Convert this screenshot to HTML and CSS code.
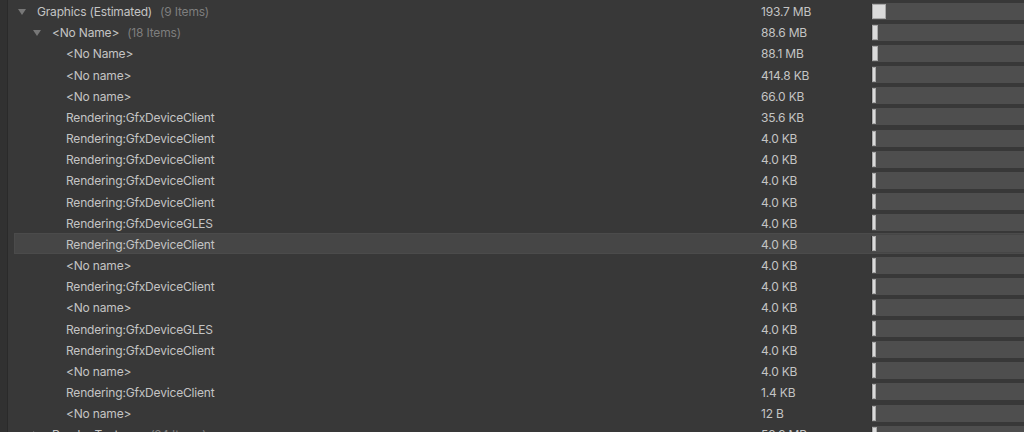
FILE: index.html
```html
<!DOCTYPE html>
<html>
<head>
<meta charset="utf-8">
<link rel="stylesheet" href="styles.css">
</head>
<body>
<div class="app">
  <div class="strip"></div>
  <div class="list">
    <div class="row">
      <div class="name l0"><span class="tri"></span>Graphics (Estimated)<span class="count">(9 Items)</span></div>
      <div class="size">193.7 MB</div>
      <div class="bar"><div class="fill big" style="width:14px"></div></div>
    </div>
    <div class="row">
      <div class="name l1"><span class="tri"></span>&lt;No Name&gt;<span class="count">(18 Items)</span></div>
      <div class="size">88.6 MB</div>
      <div class="bar"><div class="fill" style="width:6px"></div></div>
    </div>
    <div class="row"><div class="name l2">&lt;No Name&gt;</div><div class="size">88.1 MB</div><div class="bar"><div class="fill" style="width:6px"></div></div></div>
    <div class="row"><div class="name l2">&lt;No name&gt;</div><div class="size">414.8 KB</div><div class="bar"><div class="fill"></div></div></div>
    <div class="row"><div class="name l2">&lt;No name&gt;</div><div class="size">66.0 KB</div><div class="bar"><div class="fill"></div></div></div>
    <div class="row"><div class="name l2">Rendering:GfxDeviceClient</div><div class="size">35.6 KB</div><div class="bar"><div class="fill"></div></div></div>
    <div class="row"><div class="name l2">Rendering:GfxDeviceClient</div><div class="size">4.0 KB</div><div class="bar"><div class="fill"></div></div></div>
    <div class="row"><div class="name l2">Rendering:GfxDeviceClient</div><div class="size">4.0 KB</div><div class="bar"><div class="fill"></div></div></div>
    <div class="row"><div class="name l2">Rendering:GfxDeviceClient</div><div class="size">4.0 KB</div><div class="bar"><div class="fill"></div></div></div>
    <div class="row"><div class="name l2">Rendering:GfxDeviceClient</div><div class="size">4.0 KB</div><div class="bar"><div class="fill"></div></div></div>
    <div class="row"><div class="name l2">Rendering:GfxDeviceGLES</div><div class="size">4.0 KB</div><div class="bar"><div class="fill"></div></div></div>
    <div class="row selected"><div class="name l2">Rendering:GfxDeviceClient</div><div class="size">4.0 KB</div><div class="bar"><div class="fill"></div></div></div>
    <div class="row"><div class="name l2">&lt;No name&gt;</div><div class="size">4.0 KB</div><div class="bar"><div class="fill"></div></div></div>
    <div class="row"><div class="name l2">Rendering:GfxDeviceClient</div><div class="size">4.0 KB</div><div class="bar"><div class="fill"></div></div></div>
    <div class="row"><div class="name l2">&lt;No name&gt;</div><div class="size">4.0 KB</div><div class="bar"><div class="fill"></div></div></div>
    <div class="row"><div class="name l2">Rendering:GfxDeviceGLES</div><div class="size">4.0 KB</div><div class="bar"><div class="fill"></div></div></div>
    <div class="row"><div class="name l2">Rendering:GfxDeviceClient</div><div class="size">4.0 KB</div><div class="bar"><div class="fill"></div></div></div>
    <div class="row"><div class="name l2">&lt;No name&gt;</div><div class="size">4.0 KB</div><div class="bar"><div class="fill"></div></div></div>
    <div class="row"><div class="name l2">Rendering:GfxDeviceClient</div><div class="size">1.4 KB</div><div class="bar"><div class="fill"></div></div></div>
    <div class="row"><div class="name l2">&lt;No name&gt;</div><div class="size">12 B</div><div class="bar"><div class="fill"></div></div></div>
    <div class="row">
      <div class="name l1"><span class="tri right"></span>Render Textures<span class="count">(24 Items)</span></div>
      <div class="size">56.9 MB</div>
      <div class="bar"><div class="fill" style="width:5px"></div></div>
    </div>
  </div>
</div>
</body>
</html>
```

FILE: styles.css
```css
html, body {
  margin: 0;
  padding: 0;
  background: #383838;
  overflow: hidden;
}

.app {
  display: flex;
  height: 432px;
  font-family: Inter, "Noto Sans", sans-serif;
  font-size: 12px;
  letter-spacing: -0.18px;
  color: #c4c4c4;
}

.strip {
  width: 7px;
  flex: none;
  background: #313131;
  border-right: 1px solid #2a2a2a;
}

.list {
  flex: 1;
  padding-left: 6px;
  padding-top: 0.6px;
  display: flex;
  flex-direction: column;
}

.row {
  height: 21.16px;
  flex: none;
  display: grid;
  grid-template-columns: 747px 111px 1fr;
  align-items: center;
  box-sizing: border-box;
}

.row.selected {
  background: #464646;
  box-shadow: inset 0 0 0 1px #4b4b4b;
}

.name {
  display: flex;
  align-items: center;
  white-space: nowrap;
  padding-top: 1px;
}

.name.l0 { padding-left: 4px; }
.name.l1 { padding-left: 19px; }
.name.l2 { padding-left: 52px; }

.tri {
  width: 0;
  height: 0;
  border-left: 4px solid transparent;
  border-right: 4px solid transparent;
  border-top: 6px solid #777777;
  margin-right: 11px;
  margin-top: 0;
}

.tri.right {
  border-top: 4px solid transparent;
  border-bottom: 4px solid transparent;
  border-left: 6px solid #777777;
  border-right: 0;
  margin-right: 13px;
}

.count {
  color: #7e7e7e;
  margin-left: 8px;
}

.size {
  white-space: nowrap;
  padding-top: 1px;
}

.bar {
  height: 17px;
  background: #4e4e4e;
  display: flex;
  align-items: center;
}

.fill {
  width: 4px;
  height: 15px;
  box-sizing: border-box;
  background: #dadada;
  border: 1px solid #a8a8a8;
  box-shadow: -1px 0 0 #2e2e2e;
  margin-left: 0;
}
```
